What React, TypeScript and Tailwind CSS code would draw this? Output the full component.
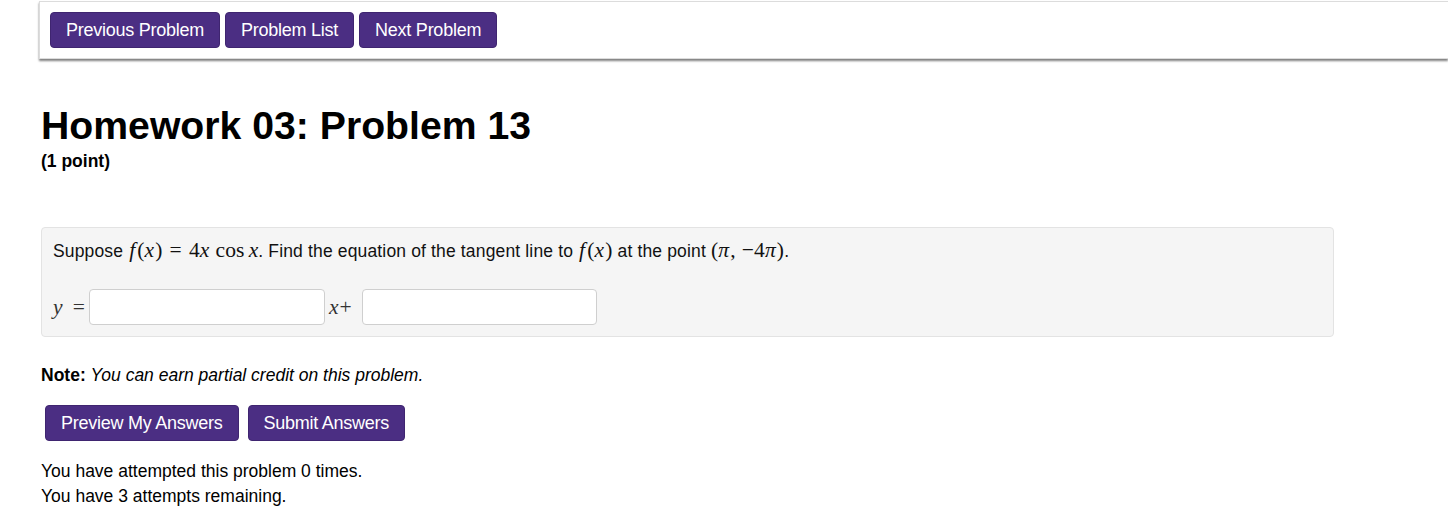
import React from 'react';

const purpleBtn =
  'rounded-[4px] border border-[#3f2570] bg-[#4b2e83] px-[15px] text-[18px] leading-[34px] text-white tracking-[-0.25px]';

type P = { children: React.ReactNode; className?: string };

function M({ children, className = '' }: P) {
  return <span className={`font-['Liberation_Serif',serif] text-[21.5px] leading-[20px] italic ${className}`}>{children}</span>;
}

function R({ children, className = '' }: P) {
  return <span className={`font-['Liberation_Serif',serif] text-[21.5px] leading-[20px] not-italic ${className}`}>{children}</span>;
}

function NavBar() {
  return (
    <div className="ml-[39px] mt-px border border-r-0 border-[#dcdcdc] bg-white px-[10px] py-[10px] shadow-[0_2px_2px_rgba(0,0,0,0.5)]">
      <div className="flex gap-[5px]">
        <button className={purpleBtn}>Previous Problem</button>
        <button className={purpleBtn}>Problem List</button>
        <button className={purpleBtn}>Next Problem</button>
      </div>
    </div>
  );
}

export default function App() {
  return (
    <div className="min-h-screen bg-white font-['Liberation_Sans',Arial,sans-serif] text-[#111]">
      <NavBar />
      <div className="pl-[41px]">
        <h1 className="mt-[44px] text-[39.2px] font-bold leading-[46px] text-black">Homework 03: Problem 13</h1>
        <div className="text-[17.5px] font-bold leading-[24px] text-black">(1 point)</div>

        <div className="mt-[54px] w-[1293px] rounded-[4px] border border-[#e3e3e3] bg-[#f5f5f5] px-[11px] pb-[11px] pt-[10px]">
          <p className="text-[17.5px] leading-[26px] tracking-[0.15px]">
            Suppose <M className="ml-[1px] mr-[2px]">f</M>
            <R>(</R>
            <M className="mr-[1px]">x</M>
            <R>)</R>
            <R className="mx-[7px]">=</R>
            <R>4</R>
            <M>x</M>
            <R className="ml-[6px] mr-[4px]">cos</R>
            <M>x</M>. Find the equation of the tangent line to <M className="ml-[1px] mr-[2px]">f</M>
            <R>(</R>
            <M className="mr-[1px]">x</M>
            <R>)</R> at the point <R>(</R>
            <M className="mr-[1px]">π</M>
            <R className="mr-[6px]">,</R>
            <R>−4</R>
            <M className="mr-[1px]">π</M>
            <R>)</R>.
          </p>
          <div className="mt-[25px] flex items-center">
            <span className="mr-[4px] flex w-[32px] items-center justify-between whitespace-nowrap text-[#333]">
              <M>y</M>
              <R>=</R>
            </span>
            <input className="h-[36px] w-[236px] rounded-[4px] border border-[#cfcfcf] bg-white" />
            <span className="mx-[4px] flex w-[29px] items-center whitespace-nowrap text-[#333]">
              <M>x</M>
              <R className="ml-[1px]">+</R>
            </span>
            <input className="h-[36px] w-[235px] rounded-[4px] border border-[#cfcfcf] bg-white" />
          </div>
        </div>

        <p className="mt-[26px] text-[17.5px] leading-[24px] text-black">
          <b>Note:</b> <i>You can earn partial credit on this problem.</i>
        </p>

        <div className="ml-[4px] mt-[18px] flex gap-[9px]">
          <button className={purpleBtn}>Preview My Answers</button>
          <button className={purpleBtn}>Submit Answers</button>
        </div>

        <div className="mt-[18px] text-[17.5px] leading-[25px] text-black">
          <div>You have attempted this problem 0 times.</div>
          <div>You have 3 attempts remaining.</div>
        </div>
      </div>
    </div>
  );
}
